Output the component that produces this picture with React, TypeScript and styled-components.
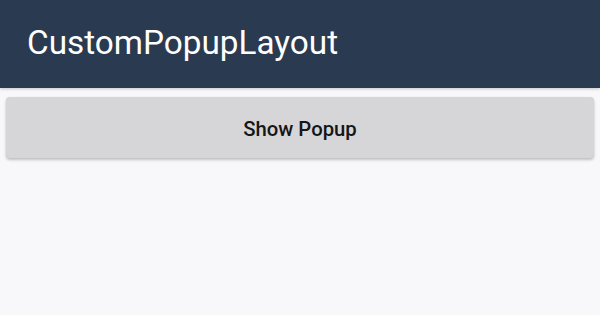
import styled, { createGlobalStyle } from "styled-components"

const GlobalStyle = createGlobalStyle`
  html, body {
    margin: 0;
    padding: 0;
    background: #f8f7f9;
  }

  body {
    font-family: Roboto, "Noto Sans", sans-serif;
  }
`

const Screen = styled.div`
  width: 600px;
  height: 315px;
  background: #f8f7f9;
  overflow: hidden;
`

const AppBar = styled.header`
  height: 88px;
  background: #2a3a51;
  display: flex;
  align-items: center;
  padding: 0 27px;
  box-sizing: border-box;
  box-shadow: 0 1px 3px rgba(0, 0, 0, 0.2);
`

const Title = styled.h1`
  margin: 0;
  margin-top: -3px;
  color: #ffffff;
  font-size: 33.3px;
  font-weight: 400;
`

const Content = styled.main`
  padding: 9px 6px;
`

const PopupButton = styled.button`
  width: 100%;
  height: 61px;
  padding: 2px 0 0;
  border: none;
  border-radius: 4px;
  background: #d6d5d7;
  color: #161616;
  font-family: Roboto, "Noto Sans", sans-serif;
  font-size: 20.3px;
  font-weight: 500;
  box-shadow: 0 2px 3px rgba(0, 0, 0, 0.22), 0 0 1px rgba(0, 0, 0, 0.12);
  cursor: pointer;
`

function App() {
  return (
    <Screen>
      <GlobalStyle />
      <AppBar>
        <Title>CustomPopupLayout</Title>
      </AppBar>
      <Content>
        <PopupButton>Show Popup</PopupButton>
      </Content>
    </Screen>
  )
}

export default App
